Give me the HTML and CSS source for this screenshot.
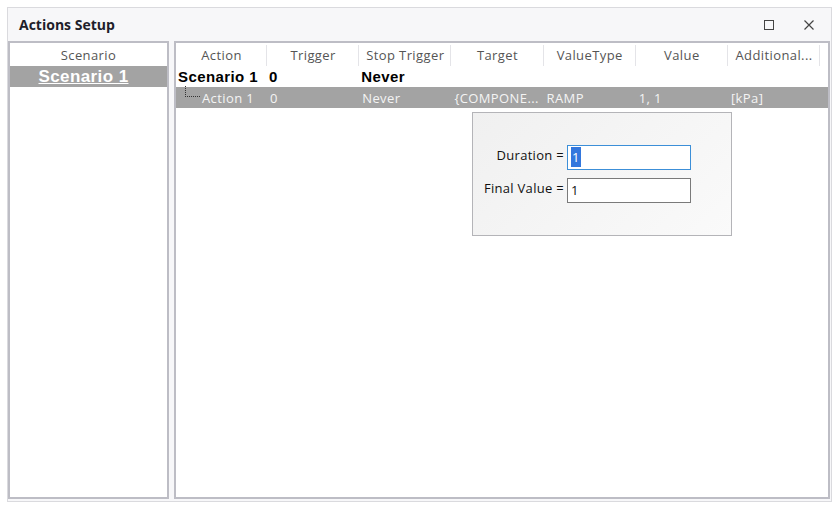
FILE: index.html
```html
<!DOCTYPE html>
<html lang="en">
<head>
  <meta charset="UTF-8" />
  <title>Actions Setup</title>
  <link rel="stylesheet" href="styles.css">
</head>
<body>
  <div class="window">
    <div class="titlebar">
      <div class="title">Actions Setup</div>
      <div class="title-buttons">
        <svg class="tb-icon" width="12" height="12" viewBox="0 0 12 12"><rect x="1.5" y="1.5" width="9" height="9" fill="none" stroke="#444" stroke-width="1"/></svg>
        <svg class="tb-icon" width="12" height="12" viewBox="0 0 12 12"><path d="M1.5 1.5 L10.5 10.5 M10.5 1.5 L1.5 10.5" stroke="#444" stroke-width="1.2"/></svg>
      </div>
    </div>
    <div class="panes">
      <div class="pane scenarios">
        <div class="head single">Scenario</div>
        <div class="scenario-row selected"><span>Scenario 1</span></div>
      </div>
      <div class="pane actions">
        <div class="grid head-row">
          <div class="hcell">Action</div>
          <div class="hcell">Trigger</div>
          <div class="hcell">Stop Trigger</div>
          <div class="hcell">Target</div>
          <div class="hcell">ValueType</div>
          <div class="hcell">Value</div>
          <div class="hcell">Additional...</div>
        </div>
        <div class="grid row group">
          <div class="cell">Scenario 1</div>
          <div class="cell">0</div>
          <div class="cell">Never</div>
          <div class="cell"></div>
          <div class="cell"></div>
          <div class="cell"></div>
          <div class="cell"></div>
        </div>
        <div class="grid row child selected">
          <div class="cell tree"><span class="tree-line"></span>Action 1</div>
          <div class="cell">0</div>
          <div class="cell">Never</div>
          <div class="cell">{COMPONE...</div>
          <div class="cell">RAMP</div>
          <div class="cell">1, 1</div>
          <div class="cell">[kPa]</div>
        </div>

        <div class="editor">
          <label class="ed-label">Duration =</label>
          <div class="ed-input focused"><span class="sel">1</span></div>
          <label class="ed-label">Final Value =</label>
          <div class="ed-input">1</div>
        </div>
      </div>
    </div>
  </div>
</body>
</html>
```

FILE: styles.css
```css
body {
  margin: 0;
  background: #fff;
  font-family: 'Open Sans', 'Noto Sans', sans-serif;
  color: #222;
}
.window {
  margin: 7px 4px 5px 7px;
  height: 493px;
  border: 1px solid #dadade;
  background: #f7f7f9;
  display: flex;
  flex-direction: column;
}
.titlebar {
  height: 33px;
  display: flex;
  align-items: center;
  justify-content: space-between;
  padding: 0 0 0 11px;
}
.title {
  font-weight: bold;
  font-size: 14px;
  color: #1e1e2a;
}
.title-buttons {
  display: flex;
  gap: 28px;
  margin-right: 16px;
}
.panes {
  flex: 1;
  display: flex;
  gap: 5px;
  padding: 0 1px 2px 0;
}
.pane {
  border: 2px solid #bdbdc5;
  background: #fff;
}
.scenarios {
  width: 157px;
}
.actions {
  flex: 1;
  position: relative;
}
.head {
  height: 23px;
  line-height: 24px;
  text-align: center;
  font-size: 13px;
  letter-spacing: 0.4px;
  color: #555;
}
.scenario-row {
  height: 21px;
  line-height: 21px;
  text-align: center;
  padding-right: 10px;
}
.scenario-row.selected {
  background: #a3a3a3;
}
.scenario-row span {
  font-family: 'Liberation Sans', Arial, sans-serif;
  font-weight: bold;
  font-size: 17px;
  color: #fff;
  text-decoration: underline;
  letter-spacing: 0.4px;
}
.grid {
  display: grid;
  grid-template-columns: 91px repeat(6, 92.2px);
}
.head-row {
  height: 23px;
  font-size: 13px;
  letter-spacing: 0.4px;
  color: #555;
}
.hcell {
  text-align: center;
  line-height: 24px;
  position: relative;
  white-space: nowrap;
}
.hcell::after {
  content: '';
  position: absolute;
  right: 0;
  top: 2px;
  bottom: 1px;
  width: 1px;
  background: #e4e4e8;
}
.row {
  height: 21px;
  line-height: 21px;
}
.row .cell {
  padding-left: 3px;
  white-space: nowrap;
}
.group {
  font-family: 'Liberation Sans', Arial, sans-serif;
  font-weight: bold;
  font-size: 15px;
  color: #000;
}
.group .cell {
  padding-left: 2px;
  letter-spacing: 0.4px;
}
.child {
  font-size: 13px;
  line-height: 22px;
  letter-spacing: 0.4px;
  color: #f4f4f4;
}
.child.selected {
  background: #a3a3a3;
}
.tree .tree-line {
  display: inline-block;
  width: 14px;
  height: 10px;
  margin: 0 2px 0 6px;
  border-left: 1px dotted #333;
  border-bottom: 1px dotted #333;
  vertical-align: top;
  position: relative;
  top: -1px;
}
.editor {
  position: absolute;
  left: 296px;
  top: 69px;
  width: 260px;
  height: 124px;
  border: 1px solid #b4b4b8;
  background: linear-gradient(135deg, #f0f0f0, #fafafa);
  display: grid;
  grid-template-columns: 91px 124px;
  grid-auto-rows: 25px;
  column-gap: 3px;
  row-gap: 8px;
  align-content: start;
  padding: 32px 0 0 0;
  box-sizing: border-box;
  font-size: 13px;
  letter-spacing: 0.3px;
  color: #111;
}
.ed-label {
  text-align: right;
  line-height: 20px;
}
.ed-input {
  border: 1px solid #7a7a7a;
  background: #fff;
  line-height: 23px;
  padding-left: 3px;
  font-size: 13px;
}
.ed-input.focused {
  border-color: #3c8fd8;
}
.sel {
  background: #3377dd;
  color: #fff;
  padding: 1px 1px;
}
```
